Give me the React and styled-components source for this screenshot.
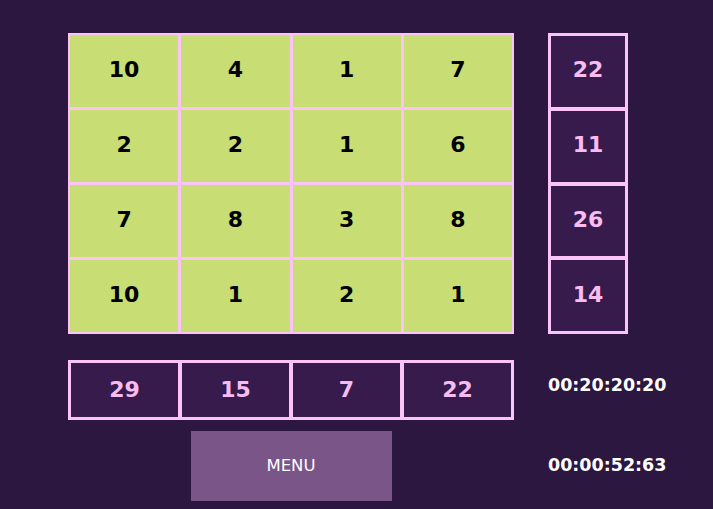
import React from "react";
import styled, { createGlobalStyle } from "styled-components";

const Global = createGlobalStyle`
  html, body { margin: 0; padding: 0; background: #2c1741; }
  body { font-family: "DejaVu Sans", Verdana, sans-serif; }
`;

const Page = styled.div`
  display: grid;
  grid-template-columns: 446px 120px;
  grid-template-rows: 301px 86px 81px;
  column-gap: 34px;
  padding: 33px 0 0 68px;
  width: 713px;
  height: 509px;
  box-sizing: border-box;
`;

const Board = styled.div`
  display: grid;
  grid-template-columns: repeat(4, 1fr);
  grid-template-rows: repeat(4, 1fr);
  gap: 3px;
  padding: 2px;
  background: #fbc4f6;
`;

const Tile = styled.div`
  background: #c8dd73;
  display: flex;
  align-items: center;
  justify-content: center;
  font-weight: bold;
  font-size: 22px;
  color: #000;
  padding-bottom: 3px;
  box-sizing: border-box;
`;

const SideColumn = styled.div`
  width: 80px;
  box-sizing: border-box;
  border: 1px solid #fbc4f6;
  display: grid;
  grid-template-rows: repeat(4, 1fr);
`;

const SumCell = styled.div`
  background: #371b4c;
  border: 2px solid #fbc4f6;
  display: flex;
  align-items: center;
  justify-content: center;
  font-weight: bold;
  font-size: 22px;
  color: #f8bcf0;
  padding-bottom: ${(p) => (p.$row ? "2px" : "3px")};
  box-sizing: border-box;
`;

const BottomRow = styled.div`
  margin-top: 26px;
  box-sizing: border-box;
  border: 1px solid #fbc4f6;
  display: grid;
  grid-template-columns: repeat(4, 1fr);
`;

const Timer = styled.div`
  margin-top: ${(p) => p.$top};
  display: flex;
  align-items: center;
  color: #ffffff;
  font-weight: bold;
  font-size: 17.5px;
  white-space: nowrap;
  padding-bottom: ${(p) => p.$pb};
`;

const MenuWrap = styled.div`
  margin-top: 11px;
  display: flex;
  justify-content: center;
`;

const MenuButton = styled.button`
  width: 201px;
  height: 70px;
  background: #7a5587;
  border: none;
  color: #ffffff;
  font-family: "DejaVu Sans", Verdana, sans-serif;
  font-size: 16.5px;
  padding: 0 0 2px 0;
  cursor: pointer;
`;

const grid = [
  [10, 4, 1, 7],
  [2, 2, 1, 6],
  [7, 8, 3, 8],
  [10, 1, 2, 1],
];
const rowSums = [22, 11, 26, 14];
const colSums = [29, 15, 7, 22];

export default function App() {
  return (
    <>
      <Global />
      <Page>
        <Board>
          {grid.flat().map((v, i) => (
            <Tile key={i}>{v}</Tile>
          ))}
        </Board>
        <SideColumn>
          {rowSums.map((v, i) => (
            <SumCell key={i}>{v}</SumCell>
          ))}
        </SideColumn>
        <BottomRow>
          {colSums.map((v, i) => (
            <SumCell key={i} $row>
              {v}
            </SumCell>
          ))}
        </BottomRow>
        <Timer $top="26px" $pb="10px">00:20:20:20</Timer>
        <MenuWrap>
          <MenuButton>MENU</MenuButton>
        </MenuWrap>
        <Timer $top="11px" $pb="2px">00:00:52:63</Timer>
      </Page>
    </>
  );
}
